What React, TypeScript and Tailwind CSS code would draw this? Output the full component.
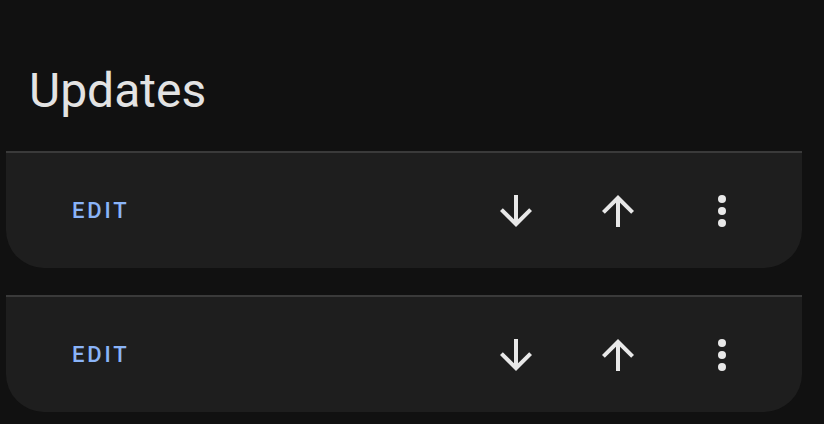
const rows = [0, 1];

function DownIcon() {
  return (
    <svg viewBox="0 0 24 24" className="w-12 h-12 fill-[#e8e8e8]">
      <path d="M20 12l-1.41-1.41L13 16.17V4h-2v12.17l-5.58-5.59L4 12l8 8 8-8z" />
    </svg>
  );
}

function UpIcon() {
  return (
    <svg viewBox="0 0 24 24" className="w-12 h-12 fill-[#e8e8e8]">
      <path d="M4 12l1.41 1.41L11 7.83V20h2V7.83l5.58 5.59L20 12l-8-8-8 8z" />
    </svg>
  );
}

function MoreIcon() {
  return (
    <svg viewBox="0 0 24 24" className="w-12 h-12 fill-[#e8e8e8]">
      <circle cx="12" cy="6" r="2" />
      <circle cx="12" cy="12" r="2" />
      <circle cx="12" cy="18" r="2" />
    </svg>
  );
}

export default function App() {
  return (
    <div className="w-[824px] h-[424px] bg-[#111111] overflow-hidden font-['Roboto',sans-serif]">
      <h1 className="pt-[63px] pl-[29px] text-[48px] leading-[56px] text-[#e3e3e3] font-normal">Updates</h1>
      <div className="mt-[32px] flex flex-col gap-[27px] pl-[6px] pr-[22px]">
        {rows.map((r) => (
          <div
            key={r}
            className="h-[117px] flex items-center bg-[#1e1e1e] border-t-2 border-[#3a3a3a] rounded-b-[38px]"
          >
            <button className="ml-[66px] text-[22px] leading-none font-medium tracking-[0.13em] text-[#8ab4f8] uppercase">
              Edit
            </button>
            <div className="ml-auto mr-[56px] flex items-center">
              <button aria-label="Move down"><DownIcon /></button>
              <button aria-label="Move up" className="ml-[54px]"><UpIcon /></button>
              <button aria-label="More" className="ml-[56px]"><MoreIcon /></button>
            </div>
          </div>
        ))}
      </div>
    </div>
  );
}
